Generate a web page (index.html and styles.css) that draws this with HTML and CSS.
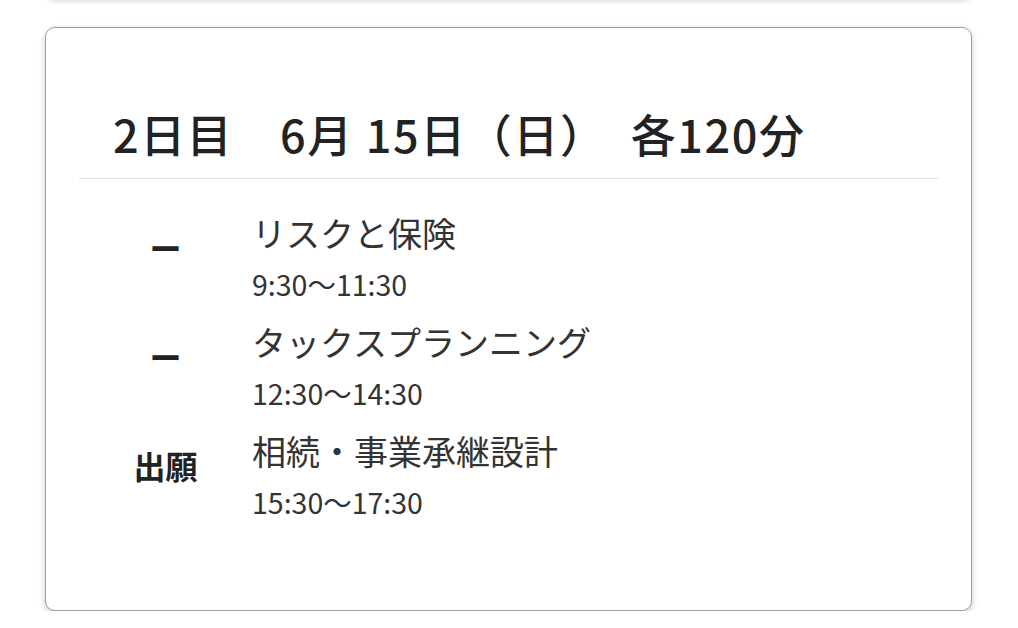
FILE: index.html
```html
<!DOCTYPE html>
<html lang="ja">
<head>
<meta charset="utf-8">
<link rel="stylesheet" href="styles.css">
</head>
<body>
<div class="page">
  <div class="card card-prev"></div>
  <section class="card">
    <h2 class="day-title">2日目　6月 15日（日）　各120分</h2>
    <ul class="sessions">
      <li class="session">
        <div class="status">ー</div>
        <div class="info">
          <div class="subject">リスクと保険</div>
          <div class="time">9:30〜11:30</div>
        </div>
      </li>
      <li class="session">
        <div class="status">ー</div>
        <div class="info">
          <div class="subject">タックスプランニング</div>
          <div class="time">12:30〜14:30</div>
        </div>
      </li>
      <li class="session">
        <div class="status">出願</div>
        <div class="info">
          <div class="subject">相続・事業承継設計</div>
          <div class="time">15:30〜17:30</div>
        </div>
      </li>
    </ul>
  </section>
</div>
</body>
</html>
```

FILE: styles.css
```css
html, body {
  margin: 0;
  padding: 0;
  background: #ffffff;
}

body {
  font-family: "Noto Sans CJK JP", "Noto Sans", sans-serif;
  color: #333333;
}

.page {
  display: flex;
  flex-direction: column;
  gap: 29px;
  padding: 0 46px 0 45px;
}

.card {
  background: #ffffff;
  border: 1.5px solid #a0a0a0;
  border-radius: 10px;
  box-shadow: 0 2px 6px rgba(0, 0, 0, 0.22);
  padding: 74px 33px 82px 33px;
}

.card-prev {
  height: 100px;
  margin-top: -104px;
  padding: 0;
}

.day-title {
  margin: 0;
  padding: 0 0 13px 34px;
  font-size: 45px;
  line-height: 63px;
  font-weight: 500;
  letter-spacing: 1.6px;
  color: #222222;
  border-bottom: 1.5px solid #dddddd;
}

.sessions {
  list-style: none;
  margin: 0;
  padding: 29px 0 0 0;
  display: flex;
  flex-direction: column;
  gap: 7px;
}

.session {
  display: flex;
  align-items: center;
}

.status {
  width: 173px;
  flex: none;
  text-align: center;
  font-size: 32px;
  font-weight: 700;
  color: #222222;
  line-height: 50px;
  margin-top: -24px;
}

.info {
  display: flex;
  flex-direction: column;
}

.subject {
  font-size: 34px;
  line-height: 50px;
  color: #333333;
}

.time {
  font-size: 28.5px;
  line-height: 52px;
  color: #333333;
}
```
